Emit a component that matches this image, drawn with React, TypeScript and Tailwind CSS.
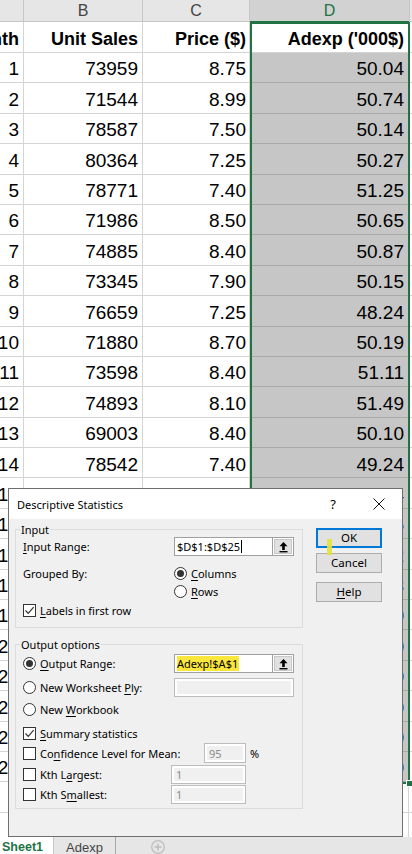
import React from "react";

const data: [string, string, string, string][] = [
  ["1", "73959", "8.75", "50.04"],
  ["2", "71544", "8.99", "50.74"],
  ["3", "78587", "7.50", "50.14"],
  ["4", "80364", "7.25", "50.27"],
  ["5", "78771", "7.40", "51.25"],
  ["6", "71986", "8.50", "50.65"],
  ["7", "74885", "8.40", "50.87"],
  ["8", "73345", "7.90", "50.15"],
  ["9", "76659", "7.25", "48.24"],
  ["10", "71880", "8.70", "50.19"],
  ["11", "73598", "8.40", "51.11"],
  ["12", "74893", "8.10", "51.49"],
  ["13", "69003", "8.40", "50.10"],
  ["14", "78542", "7.40", "49.24"],
  ["15", "72650", "8.20", "50.54"],
  ["16", "75218", "7.60", "50.85"],
  ["17", "71027", "8.90", "49.72"],
  ["18", "77403", "7.30", "51.13"],
  ["19", "74126", "8.00", "50.30"],
  ["20", "73880", "8.30", "50.10"],
  ["21", "76012", "7.70", "50.90"],
  ["22", "72559", "8.60", "50.60"],
  ["23", "75934", "7.50", "49.80"],
  ["24", "74401", "8.10", "50.20"],
];

function U({ children }: { children: React.ReactNode }) {
  return <span className="underline underline-offset-[2px]">{children}</span>;
}

function Radio({ checked }: { checked?: boolean }) {
  return (
    <div className="w-[13px] h-[13px] rounded-full border border-[#333333] bg-white flex items-center justify-center shrink-0">
      {checked && <div className="w-[7px] h-[7px] rounded-full bg-[#333333]" />}
    </div>
  );
}

function Check({ checked }: { checked?: boolean }) {
  return (
    <div className="w-[13px] h-[13px] border border-[#333333] bg-white flex items-center justify-center shrink-0">
      {checked && (
        <svg width="11" height="11" viewBox="0 0 11 11">
          <path d="M1.5 5.5 L4.3 8.3 L9.6 2.2" fill="none" stroke="#333" strokeWidth="1.2" />
        </svg>
      )}
    </div>
  );
}

function UpArrow() {
  return (
    <svg width="11" height="12" viewBox="0 0 11 12">
      <path d="M5.5 1 L1.5 5.2 L4.2 5.2 L4.2 9 L6.8 9 L6.8 5.2 L9.5 5.2 Z" fill="#000" />
      <rect x="1.5" y="10" width="8" height="1.4" fill="#000" />
    </svg>
  );
}

function RefBox({ children }: { children: React.ReactNode }) {
  return (
    <div className="flex h-[19px] w-[120px] border border-[#a0a0a0] bg-white">
      <div className="flex-1 flex items-center pl-[2px] overflow-hidden whitespace-nowrap">{children}</div>
      <div className="w-[21px] border-l border-[#a0a0a0] p-[1px]">
        <div className="w-full h-full bg-[#e1e1e1] border border-[#c8c8c8] flex items-center justify-center">
          <UpArrow />
        </div>
      </div>
    </div>
  );
}

function DisabledBox({ w, h, text }: { w: string; h: string; text?: string }) {
  return (
    <div className={`${w} ${h} border border-[#bcbcbc] bg-white p-[2px] shrink-0`}>
      <div className="w-full h-full bg-[#f0f0f0] flex items-center pl-[2px] text-[#8c8c8c]">{text}</div>
    </div>
  );
}

function Btn({ children, primary }: { children: React.ReactNode; primary?: boolean }) {
  return (
    <div
      className={`w-[66px] h-[20px] bg-[#e1e1e1] flex items-center justify-center ${
        primary ? "border-2 border-[#0078d7]" : "border border-[#adadad]"
      }`}
    >
      {children}
    </div>
  );
}

function Dialog() {
  return (
    <div className="absolute left-[8px] top-[488px] w-[395px] h-[349px] border border-[#6f6f6f] bg-[#f0f0f0] text-[11px] text-black font-['Noto_Sans',sans-serif] leading-none">
      {/* title bar */}
      <div className="h-[30px] bg-white flex items-center">
        <div className="pl-[8px] flex-1 text-[11px]">Descriptive Statistics</div>
        <div className="w-[46px] h-full flex items-center justify-center text-[13px]">?</div>
        <div className="w-[46px] h-full flex items-center justify-center">
          <svg width="12" height="12" viewBox="0 0 12 12">
            <path d="M0.5 0.5 L11.5 11.5 M11.5 0.5 L0.5 11.5" stroke="#111" strokeWidth="1" fill="none" />
          </svg>
        </div>
      </div>

      {/* body */}
      <div className="flex pl-[6px] pt-[9px]">
        <div className="w-[288px] shrink-0">
          {/* Input group */}
          <div className="relative mt-[1px] border border-[#dcdcdc] pl-[7px] pt-[7px] pb-[8px]">
            <div className="absolute left-[4px] -top-[7px] bg-[#f0f0f0] px-[1px] h-[13px] flex items-center">Input</div>
            <div className="flex items-center h-[19px]">
              <div className="w-[151px]">
                <U>I</U>nput Range:
              </div>
              <RefBox>
                <span>$D$1:$D$25</span>
                <span className="inline-block w-[1px] h-[13px] bg-black ml-[1px]" />
              </RefBox>
            </div>
            <div className="flex items-center h-[18px] mt-[8px]">
              <div className="w-[151px]">Grouped By:</div>
              <Radio checked />
              <div className="ml-[4px]">
                <U>C</U>olumns
              </div>
            </div>
            <div className="flex items-center h-[18px]">
              <div className="w-[151px]" />
              <Radio />
              <div className="ml-[4px]">
                <U>R</U>ows
              </div>
            </div>
            <div className="flex items-center h-[18px] mt-[1px]">
              <Check checked />
              <div className="ml-[4px]">
                <U>L</U>abels in first row
              </div>
            </div>
          </div>

          {/* Output group */}
          <div className="relative mt-[16px] border border-[#dcdcdc] pl-[7px] pt-[9px] pb-[4px]">
            <div className="absolute left-[4px] -top-[7px] bg-[#f0f0f0] px-[1px] h-[13px] flex items-center">Output options</div>
            <div className="flex items-center h-[19px]">
              <Radio checked />
              <div className="ml-[4px] w-[134px]">
                <U>O</U>utput Range:
              </div>
              <RefBox>
                <span className="bg-[#fbe63c] pr-[1px] h-[15px] flex items-center">Adexp!$A$1</span>
              </RefBox>
            </div>
            <div className="flex items-center h-[19px] mt-[5px]">
              <Radio />
              <div className="ml-[4px] w-[134px]">
                New Worksheet <U>P</U>ly:
              </div>
              <DisabledBox w="w-[120px]" h="h-[19px]" />
            </div>
            <div className="flex items-center h-[18px] mt-[3px]">
              <Radio />
              <div className="ml-[4px]">
                New <U>W</U>orkbook
              </div>
            </div>
            <div className="flex items-center h-[18px] mt-[6px]">
              <Check checked />
              <div className="ml-[4px]">
                <U>S</U>ummary statistics
              </div>
            </div>
            <div className="flex items-center h-[20px] mt-[1px]">
              <Check />
              <div className="ml-[4px] w-[164px]">
                Co<U>n</U>fidence Level for Mean:
              </div>
              <DisabledBox w="w-[42px]" h="h-[20px]" text="95" />
              <div className="ml-[4px]">%</div>
            </div>
            <div className="flex items-center h-[19px] mt-[2px]">
              <Check />
              <div className="ml-[4px] w-[131px]">
                Kth L<U>a</U>rgest:
              </div>
              <DisabledBox w="w-[75px]" h="h-[19px]" text="1" />
            </div>
            <div className="flex items-center h-[19px] mt-[1px]">
              <Check />
              <div className="ml-[4px] w-[131px]">
                Kth S<U>m</U>allest:
              </div>
              <DisabledBox w="w-[75px]" h="h-[19px]" text="1" />
            </div>
          </div>
        </div>

        {/* buttons */}
        <div className="ml-[13px] flex flex-col text-[11.5px]">
          <Btn primary>OK</Btn>
          <div className="mt-[5px]">
            <Btn>Cancel</Btn>
          </div>
          <div className="mt-[9px]">
            <Btn>
              <span>
                <U>H</U>elp
              </span>
            </Btn>
          </div>
        </div>
      </div>

      {/* yellow highlighter mark */}
      <div className="absolute left-[318px] top-[50px] w-[5px] h-[16px] bg-[#e4e23a] opacity-90" />
    </div>
  );
}

function Row({ a, b, c, d, head }: { a: string; b: string; c: string; d: string; head?: boolean }) {
  const txt = head ? "font-bold text-[18px]" : "text-[19px]";
  return (
    <div className={`flex shrink-0 ${head ? "h-[31px]" : "h-[30.4px]"} ${txt}`}>
      <div className="w-[24px] shrink-0 border-r border-b border-[#d4d4d4] flex items-center justify-end pr-[4px] pt-[4px] overflow-hidden whitespace-nowrap">
        {a}
      </div>
      <div className="w-[119px] shrink-0 border-r border-b border-[#d4d4d4] flex items-center justify-end pr-[4px] pt-[4px] whitespace-nowrap">
        {b}
      </div>
      <div className="w-[107px] shrink-0 border-r border-b border-[#d4d4d4] flex items-center justify-end pr-[3px] pt-[4px] whitespace-nowrap">
        {c}
      </div>
      <div
        className={`w-[159px] shrink-0 border-b flex items-center justify-end pr-[5px] pt-[4px] whitespace-nowrap ${
          head ? "bg-white border-[#d4d4d4]" : "bg-[#c6c6c6] border-[#a9a9a9]"
        }`}
      >
        {d}
      </div>
      <div className="flex-1 border-b border-[#d4d4d4]" />
    </div>
  );
}

function EmptyRow({ h }: { h: string }) {
  return (
    <div className={`flex shrink-0 ${h}`}>
      <div className="w-[24px] shrink-0 border-r border-b border-[#d4d4d4]" />
      <div className="w-[119px] shrink-0 border-r border-b border-[#d4d4d4]" />
      <div className="w-[107px] shrink-0 border-r border-b border-[#d4d4d4]" />
      <div className="w-[159px] shrink-0 border-r border-b border-[#d4d4d4]" />
      <div className="flex-1 border-b border-[#d4d4d4]" />
    </div>
  );
}

export default function App() {
  return (
    <div className="relative w-[412px] h-[854px] overflow-hidden bg-white text-black font-['Liberation_Sans',Arial,sans-serif]">
      <div className="h-[837px] overflow-hidden flex flex-col">
        {/* column headers */}
        <div className="flex h-[22px] shrink-0 bg-[#e6e6e6] text-[16px] text-[#444444]">
          <div className="w-[24px] shrink-0 border-r border-b border-[#c6c6c6]" />
          <div className="w-[119px] shrink-0 border-r border-b border-[#c6c6c6] flex items-center justify-center">B</div>
          <div className="w-[107px] shrink-0 border-r border-b border-[#c6c6c6] flex items-center justify-center">C</div>
          <div className="w-[159px] shrink-0 bg-[#d2d2d2] border-b border-[#217346] flex items-center justify-center text-[#217346]">
            D
          </div>
          <div className="flex-1 border-l border-b border-[#c6c6c6]" />
        </div>
        <Row a="Month" b="Unit Sales" c="Price ($)" d="Adexp ('000$)" head />
        {data.map((r) => (
          <Row key={r[0]} a={r[0]} b={r[1]} c={r[2]} d={r[3]} />
        ))}
        <EmptyRow h="h-[30.4px]" />
        <EmptyRow h="h-[30.4px]" />
      </div>

      {/* sheet tabs */}
      <div className="flex h-[17px] bg-[#e6e6e6] items-start">
        <div className="w-[54px] h-[30px] bg-white border-r border-[#c6c6c6] pl-[2px] pt-[4px] text-[12.5px] font-bold text-[#217346] leading-none">
          Sheet1
        </div>
        <div className="w-[62px] h-[30px] border-r border-[#a8a8a8] flex justify-center pt-[4px] text-[13px] text-[#444444] leading-none">
          Adexp
        </div>
        <div className="ml-[35px] mt-[3px]">
          <svg width="14" height="14" viewBox="0 0 14 14">
            <circle cx="7" cy="7" r="6.3" fill="none" stroke="#bdbdbd" strokeWidth="1.2" />
            <path d="M7 3.5 V10.5 M3.5 7 H10.5" stroke="#bdbdbd" strokeWidth="1.4" />
          </svg>
        </div>
      </div>

      {/* selection outline */}
      <div className="absolute left-[250px] top-[22px] w-[160px] h-[762px] border-2 border-[#217346] pointer-events-none" />
      <div className="absolute left-[406px] top-[780px] w-[7px] h-[7px] bg-[#217346] border border-white" />

      <Dialog />
    </div>
  );
}
